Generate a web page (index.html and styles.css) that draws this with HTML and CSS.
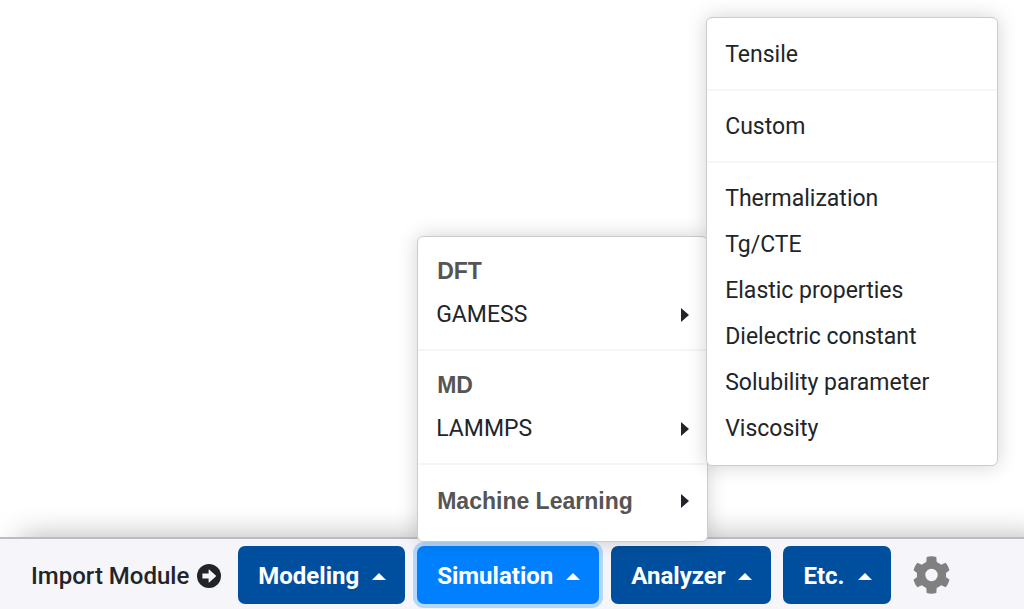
FILE: index.html
```html
<!DOCTYPE html>
<html lang="en">
<head>
<meta charset="utf-8">
<meta name="viewport" content="width=device-width, initial-scale=1">
<title>Import Module</title>
<link rel="stylesheet" href="styles.css">
</head>
<body>
<main class="workspace"></main>
<footer class="toolbar">
  <div class="toolbar-label">
    <span>Import Module</span>
    <svg class="arrow-icon" viewBox="0 0 24 24" aria-hidden="true"><circle cx="12" cy="12" r="12" fill="#212529"/><path d="M5.400 9.600h6.200V6q0-.9.800-.3l6.400 5.800q.6.500 0 1l-6.400 5.800q-.8.600-.8-.3v-3.600H5.400z" fill="#f5f5fa"/></svg>
  </div>
  <nav class="modules">
    <button class="module-button" type="button">Modeling<span class="caret-up"></span></button>
    <div class="dropdown">
      <button class="module-button module-button-active" type="button" aria-expanded="true">Simulation<span class="caret-up"></span></button>
      <ul class="menu menu-main">
        <li class="menu-header">DFT</li>
        <li><a class="menu-item" href="#gamess">GAMESS<span class="caret-right"></span></a></li>
        <li class="divider"></li>
        <li class="menu-header">MD</li>
        <li class="has-submenu">
          <a class="menu-item" href="#lammps">LAMMPS<span class="caret-right"></span></a>
          <ul class="menu menu-sub">
            <li><a class="menu-item" href="#tensile">Tensile</a></li>
            <li class="divider"></li>
            <li><a class="menu-item" href="#custom">Custom</a></li>
            <li class="divider"></li>
            <li><a class="menu-item" href="#thermalization">Thermalization</a></li>
            <li><a class="menu-item" href="#tg-cte">Tg/CTE</a></li>
            <li><a class="menu-item" href="#elastic">Elastic properties</a></li>
            <li><a class="menu-item" href="#dielectric">Dielectric constant</a></li>
            <li><a class="menu-item" href="#solubility">Solubility parameter</a></li>
            <li><a class="menu-item" href="#viscosity">Viscosity</a></li>
          </ul>
        </li>
        <li class="divider"></li>
        <li><a class="menu-item menu-item-strong" href="#machine-learning">Machine Learning<span class="caret-right"></span></a></li>
      </ul>
    </div>
    <button class="module-button" type="button">Analyzer<span class="caret-up"></span></button>
    <button class="module-button" type="button">Etc.<span class="caret-up"></span></button>
  </nav>
  <button class="settings" type="button" aria-label="Settings">
    <svg class="gear-icon" viewBox="0 0 36 38" aria-hidden="true"><path fill="#808080" fill-rule="evenodd" d="M13.200 1Q18 -.3 22.800 1L23.200 5.900Q25.500 6.900 27.700 8.700L32.200 6.700Q35 10 36 14.200L32.400 17Q32.800 19 32.400 21L36 23.800Q35 28 32.200 31.300L27.700 29.300Q25.500 31.100 23.200 32.100L22.800 37Q18 38.300 13.200 37L12.800 32.100Q10.500 31.100 8.300 29.300L3.800 31.300Q1 28 0 23.800L3.600 21Q3.200 19 3.600 17L0 14.200Q1 10 3.800 6.700L8.300 8.700Q10.500 6.900 12.800 5.900ZM18 12.800A6.200 6.200 0 1 0 18 25.200A6.200 6.200 0 1 0 18 12.800Z"/></svg>
  </button>
</footer>
</body>
</html>
```
FILE: styles.css
```css
* { box-sizing: border-box; }

body {
  display: flex;
  flex-direction: column;
  min-height: 100vh;
  margin: 0;
  overflow: hidden;
  background: #fff;
  color: #212529;
  font-family: Roboto, sans-serif;
  font-size: 23px;
  line-height: 34px;
}

.workspace { flex: 1; }

.toolbar {
  display: flex;
  align-items: center;
  padding: 7px 31px 5px;
  border-top: 2px solid #bcbcbe;
  background: #f5f5fa;
  box-shadow: 20px 0 30px rgba(0, 0, 0, 0.3);
}

.toolbar-label {
  display: flex;
  align-items: center;
  gap: 8px;
  margin-right: 17px;
  padding-top: 2px;
  font-size: 24px;
  font-weight: 500;
}

.arrow-icon { width: 24px; height: 24px; }

.modules { display: flex; gap: 12px; }

.module-button {
  display: flex;
  align-items: center;
  gap: 13px;
  height: 58px;
  padding: 2px 19px 0 20px;
  border: 0;
  border-radius: 7px;
  background: #004f9e;
  color: #fff;
  font: 700 24px/34px Roboto, sans-serif;
}

.module-button-active {
  background: #0080ff;
  box-shadow: 0 0 0 4px #b5d7fc;
}

.caret-up {
  border: 7px solid transparent;
  border-top: 0;
  border-bottom-color: #fff;
}

.caret-right {
  border: 7px solid transparent;
  border-right: 0;
  border-left: 8px solid #212529;
}

.dropdown, .has-submenu { position: relative; }

.menu {
  position: absolute;
  width: 292px;
  margin: 0;
  border: 1px solid #ccc;
  border-radius: 6px;
  background: #fff;
  box-shadow: 0 0 20px rgba(0, 0, 0, 0.18);
  list-style: none;
}

.menu-main { bottom: calc(100% + 4px); left: 0; width: 291px; padding: 13px 0 17px; }

.menu-sub { bottom: -14px; left: calc(100% - 1px); padding: 14px 0 13px; }

.menu-header {
  padding: 4px 19px;
  color: #555;
  font-family: "Liberation Sans", sans-serif;
  font-weight: 700;
}

.menu-item {
  display: flex;
  align-items: center;
  justify-content: space-between;
  padding: 6px 18px;
  color: #212529;
  text-decoration: none;
}

.menu-item-strong {
  padding-left: 19px;
  color: #555;
  font-family: "Liberation Sans", sans-serif;
  font-weight: 700;
}

.divider { height: 2px; margin: 11px 0 13px; background: #f5f5f7; }

.settings {
  display: flex;
  margin-left: 22px;
  padding: 0;
  border: 0;
  background: none;
}

.gear-icon { width: 37px; height: 38px; }
```
